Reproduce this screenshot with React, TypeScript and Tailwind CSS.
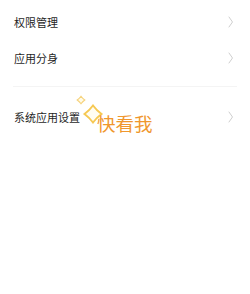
import React from "react";

const Chevron = () => (
  <svg width="6" height="12" viewBox="0 0 6 12" fill="none">
    <path d="M1 1 L4.5 6 L1 11" stroke="#cfcfcf" strokeWidth="1" strokeLinecap="round" strokeLinejoin="round" />
  </svg>
);

const Row = ({ label, children }: { label: string; children?: React.ReactNode }) => (
  <div className="relative flex h-9 items-center justify-between pl-[14px] pr-[16px]">
    <span className="text-[11px] leading-none text-[#1f1f1f]">{label}</span>
    <Chevron />
    {children}
  </div>
);

const star = (cx: number, cy: number, r: number, k: number) =>
  `M${cx} ${cy - r} Q${cx + k} ${cy - k} ${cx + r} ${cy} Q${cx + k} ${cy + k} ${cx} ${cy + r} Q${cx - k} ${cy + k} ${cx - r} ${cy} Q${cx - k} ${cy - k} ${cx} ${cy - r} Z`;

export default function App() {
  return (
    <div
      className="h-[294px] w-[250px] bg-white pt-[4px]"
      style={{ fontFamily: '"Noto Sans CJK SC", "Noto Sans", sans-serif' }}
    >
      <Row label="权限管理" />
      <Row label="应用分身" />
      <div className="mx-[13px] mt-[10px] h-px bg-[#f4f4f4]" />
      <div className="mt-[12px]">
        <Row label="系统应用设置">
          <div className="absolute left-[72px] top-[-9px]">
            <svg width="34" height="36" viewBox="0 0 34 36">
              <path d={star(9, 10, 3.8, 1.6)} fill="#fffbe8" stroke="#f6d27c" strokeWidth="1.1" />
              <path d={star(21, 24, 10, 4)} fill="#fdeaa8" opacity="0.5" />
              <path d={star(21, 24, 8.5, 3.6)} fill="#fffdf2" stroke="#f6c852" strokeWidth="1.8" />
            </svg>
          </div>
          <span className="absolute left-[97px] top-[15px] text-[18.5px] leading-none text-[#f0972e]">
            快看我
          </span>
        </Row>
      </div>
    </div>
  );
}
